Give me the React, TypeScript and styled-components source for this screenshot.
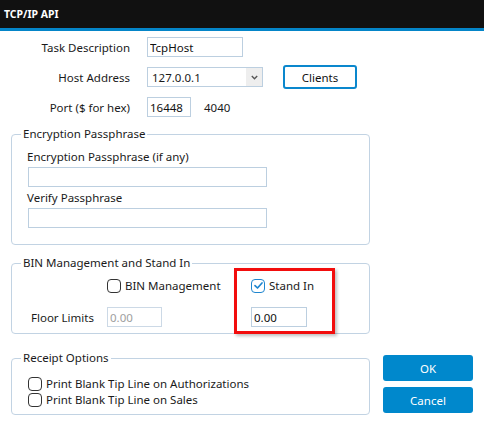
import React from 'react';
import styled, {createGlobalStyle} from 'styled-components';

const GlobalStyle = createGlobalStyle`
  html, body {
    margin: 0;
    padding: 0;
    background: #ffffff;
  }

  body {
    font-family: "Noto Sans", "Open Sans", sans-serif;
    font-size: 11.5px;
    color: #1a1a1a;
  }
`;

const Check = ({checked}: {checked?: boolean}) => (
  <CheckBox checked={checked}>
    {checked &&
      <svg width="11" height="11" viewBox="0 0 11 11">
        <path d="M2 5.6 L4.5 8 L9 3" fill="none" stroke="#1f86cf" strokeWidth="1.7" strokeLinecap="round" strokeLinejoin="round"/>
      </svg>
    }
  </CheckBox>
);

const ChevronDown = () => (
  <svg width="7" height="5" viewBox="0 0 7 5">
    <path d="M0.8 1 L3.5 3.7 L6.2 1" fill="none" stroke="#555" strokeWidth="1.4"/>
  </svg>
);

export default function App() {
  return (
    <>
      <GlobalStyle/>
      <Window>
        <TitleBar>TCP/IP API</TitleBar>
        <Body>
          <TopForm>
            <FieldLabel>Task Description</FieldLabel>
            <Row height={20}>
              <TextBox width={96} value="TcpHost" readOnly/>
            </Row>

            <FieldLabel>Host Address</FieldLabel>
            <Row height={24}>
              <Select>
                <span>127.0.0.1</span>
                <SelectArrow><ChevronDown/></SelectArrow>
              </Select>
              <OutlineButton>Clients</OutlineButton>
            </Row>

            <FieldLabel>Port ($ for hex)</FieldLabel>
            <Row height={20}>
              <TextBox width={44} value="16448" readOnly/>
              <HexValue>4040</HexValue>
            </Row>
          </TopForm>

          <Group space={9}>
            <Legend>Encryption Passphrase</Legend>
            <StackedFields>
              <StackedLabel>Encryption Passphrase (if any)</StackedLabel>
              <TextBox width={239} readOnly/>
              <StackedLabel>Verify Passphrase</StackedLabel>
              <TextBox width={239} readOnly/>
            </StackedFields>
          </Group>

          <Group space={10}>
            <Legend>BIN Management and Stand In</Legend>
            <BinGrid>
              <span/>
              <CheckRow>
                <Check/>
                BIN Management
              </CheckRow>
              <StandInCell>
                <CheckRow>
                  <Check checked/>
                  Stand In
                </CheckRow>
                <TextBox width={56} value="0.00" readOnly/>
              </StandInCell>
              <FloorLabel>Floor Limits</FloorLabel>
              <TextBox width={55} value="0.00" disabled readOnly/>
            </BinGrid>
          </Group>

          <Footer>
            <Group space={0}>
              <Legend>Receipt Options</Legend>
              <OptionList>
                <CheckRow>
                  <Check/>
                  Print Blank Tip Line on Authorizations
                </CheckRow>
                <CheckRow>
                  <Check/>
                  Print Blank Tip Line on Sales
                </CheckRow>
              </OptionList>
            </Group>
            <Actions>
              <PrimaryButton>OK</PrimaryButton>
              <PrimaryButton>Cancel</PrimaryButton>
            </Actions>
          </Footer>
        </Body>
      </Window>
    </>
  );
}

const Window = styled.div`
  width: 484px;
  height: 428px;
  background: #fff;
`;

const TitleBar = styled.div`
  height: 28px;
  display: flex;
  align-items: center;
  padding-left: 4px;
  background: #111111;
  border-bottom: 3px solid #0485c8;
  color: #fff;
  font-weight: 700;
  font-size: 10.5px;
`;

const Body = styled.div`
  padding-top: 6px;
`;

const TopForm = styled.div`
  display: grid;
  grid-template-columns: 130px 1fr;
  column-gap: 17px;
  row-gap: 8px;
  align-items: center;
`;

const FieldLabel = styled.div`
  text-align: right;
`;

const Row = styled.div<{height: number}>`
  height: ${p => p.height}px;
  display: flex;
  align-items: center;
`;

const TextBox = styled.input<{width: number}>`
  box-sizing: border-box;
  width: ${p => p.width}px;
  height: 20px;
  padding: 0 2px;
  border: 1px solid #bccfe0;
  border-radius: 0;
  outline: none;
  font-family: inherit;
  font-size: 11.5px;
  color: #111;
  background: #fff;

  &:disabled {
    color: #a0a0a0;
    border-color: #ccd9e6;
    background: #fff;
  }
`;

const Select = styled.div`
  box-sizing: border-box;
  width: 116px;
  height: 20px;
  display: flex;
  align-items: center;
  justify-content: space-between;
  padding-left: 4px;
  border: 1px solid #bccfe0;
`;

const SelectArrow = styled.div`
  width: 16px;
  height: 18px;
  display: flex;
  align-items: center;
  justify-content: center;
  background: #eeeeee;
`;

const OutlineButton = styled.button`
  box-sizing: border-box;
  width: 74px;
  height: 24px;
  margin-left: 20px;
  border: 2px solid #0a87cd;
  border-radius: 3px;
  background: #fff;
  font-family: inherit;
  font-size: 11.5px;
  color: #111;
  padding: 0;
`;

const HexValue = styled.span`
  margin-left: 13px;
`;

const Group = styled.fieldset<{space: number}>`
  box-sizing: border-box;
  width: 359px;
  margin: ${p => p.space}px 0 0 11px;
  padding: 0;
  border: 1px solid #c2d3e3;
  border-radius: 4px;
  min-width: 0;
`;

const Legend = styled.legend`
  margin-left: 9px;
  padding: 0 2px;
  line-height: 16px;
`;

const StackedFields = styled.div`
  display: flex;
  flex-direction: column;
  align-items: flex-start;
  padding: 7px 0 16px 15px;
`;

const StackedLabel = styled.div`
  line-height: 16px;
  margin-bottom: 2px;

  & + input {
    margin-left: 1px;
  }

  input + & {
    margin-top: 3px;
  }
`;

const BinGrid = styled.div`
  display: grid;
  grid-template-columns: 76px 144px 1fr;
  grid-template-rows: 21px 20px;
  row-gap: 11px;
  align-items: center;
  padding: 4px 0 6px 19px;
`;

const CheckRow = styled.label`
  display: flex;
  align-items: center;
  gap: 4px;
  line-height: 16px;
  white-space: nowrap;
`;

const CheckBox = styled.span<{checked?: boolean}>`
  box-sizing: border-box;
  width: 14px;
  height: 14px;
  flex: none;
  display: flex;
  align-items: center;
  justify-content: center;
  border: 1px solid ${p => p.checked ? '#1f86cf' : '#333'};
  border-radius: 4px;
  background: #fff;
`;

const StandInCell = styled.div`
  grid-row: 1 / span 2;
  grid-column: 3;
  position: relative;
  display: flex;
  flex-direction: column;
  justify-content: space-between;
  align-self: stretch;

  & > label {
    height: 21px;
  }

  /* highlight frame drawn around the stand-in settings */
  &::after {
    content: '';
    position: absolute;
    left: -17px;
    top: -7px;
    width: 95px;
    height: 60px;
    border: 3px solid #f20d0d;
    box-shadow: 2px 2px 3px rgba(0, 0, 0, 0.25);
  }
`;

const FloorLabel = styled.div`
  grid-row: 2;
  grid-column: 1;
`;

const Footer = styled.div`
  display: flex;
  align-items: flex-start;
  margin-top: 16px;
`;

const OptionList = styled.div`
  display: flex;
  flex-direction: column;
  gap: 0;
  padding: 10px 0 6px 16px;
`;

const Actions = styled.div`
  display: flex;
  flex-direction: column;
  gap: 6px;
  margin: 5px 0 0 13px;
`;

const PrimaryButton = styled.button`
  width: 90px;
  height: 26px;
  border: none;
  border-radius: 3px;
  background: #0088cc;
  color: #fff;
  font-family: inherit;
  font-size: 11.5px;
  padding: 0;
`;
